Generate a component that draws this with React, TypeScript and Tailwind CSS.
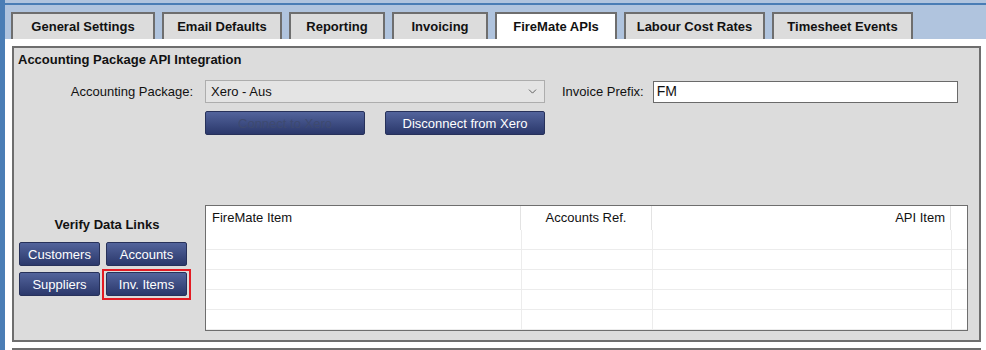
import { ChevronDown } from 'lucide-react';

const tabs = [
  { label: 'General Settings', w: 'w-[144px]' },
  { label: 'Email Defaults', w: 'w-[120px]' },
  { label: 'Reporting', w: 'w-[96px]' },
  { label: 'Invoicing', w: 'w-[96px]' },
  { label: 'FireMate APIs', w: 'w-[122px]', active: true },
  { label: 'Labour Cost Rates', w: 'w-[141px]' },
  { label: 'Timesheet Events', w: 'w-[141px]' },
];

const btn =
  'h-[24px] rounded-[2px] border border-[#27315a] bg-gradient-to-b from-[#53649c] to-[#2b386b] text-[13px] leading-none';

function NavyButton({ label, className = '', disabled = false }: { label: string; className?: string; disabled?: boolean }) {
  return (
    <button className={`${btn} ${disabled ? 'text-[#3e4a70]' : 'text-white'} ${className}`}>{label}</button>
  );
}

export default function App() {
  return (
    <div
      className="w-[986px] h-[350px] overflow-hidden bg-[#b0c4de] border-l-[5px] border-[#4a7db5] text-[#111]"
      style={{ fontFamily: '"Liberation Sans", Arial, sans-serif' }}
    >
      <div className="mt-[3px] h-[2px] bg-[#4a7db5]" />

      {/* tab strip */}
      <div className="flex gap-[7px] pl-[6px] pt-[7px]">
        {tabs.map((t) => (
          <div
            key={t.label}
            className={`${t.w} h-[27px] flex items-center justify-center border-2 border-b-0 border-[#6e6e6e] text-[13px] font-bold ${
              t.active ? 'bg-white' : 'bg-[#dcdcdc]'
            }`}
          >
            {t.label}
          </div>
        ))}
      </div>

      {/* content */}
      <div className="h-[311px] bg-white pl-[7px] pt-[7px]">
        <div className="w-[969px] h-[296px] border-2 border-[#6e6e6e] bg-[#dcdcdc] flex flex-col">
          <div className="pl-[4px] pt-[4px] text-[13px] font-bold leading-[16px]">
            Accounting Package API Integration
          </div>

          <div className="flex items-center mt-[12px] text-[13px]">
            <div className="w-[179px] text-right">Accounting Package:</div>
            <div className="ml-[12px] w-[340px] h-[23px] border border-[#adadad] bg-[#e4e4e4] flex items-center justify-between pl-[5px] pr-[5px]">
              <span>Xero - Aus</span>
              <ChevronDown size={13} strokeWidth={1.5} color="#444" />
            </div>
            <div className="ml-[17px]">Invoice Prefix:</div>
            <div className="ml-[9px] w-[305px] h-[22px] border border-[#6a6a6a] bg-white flex items-center pl-[3px] text-[14px]">
              FM
            </div>
          </div>

          <div className="flex mt-[8px] ml-[191px] gap-[20px]">
            <NavyButton label="Connect to Xero" className="w-[160px]" disabled />
            <NavyButton label="Disconnect from Xero" className="w-[160px]" />
          </div>

          <div className="flex mt-[70px]">
            <div className="w-[191px] pl-[5px] pt-[12px]">
              <div className="w-[168px] pl-[8px] text-center text-[13px] font-bold leading-[16px]">Verify Data Links</div>
              <div className="grid grid-cols-[81px_81px] gap-x-[6px] gap-y-[6px] mt-[9px]">
                <NavyButton label="Customers" />
                <NavyButton label="Accounts" />
                <NavyButton label="Suppliers" />
                {/* red highlight box around Inv. Items */}
                <div className="-mx-[4px] -mt-[3px] -mb-[4px] border-2 border-[#e31b23] px-[2px] pt-[1px] pb-[2px] flex">
                  <NavyButton label="Inv. Items" className="w-[81px]" />
                </div>
              </div>
            </div>

            <div className="w-[763px] h-[126px] border border-[#6e6e6e] bg-white text-[13px] flex flex-col">
              <div className="flex h-[24px] items-center">
                <div className="w-[315px] pl-[6px] border-r border-[#e3e3e3] h-full flex items-center">FireMate Item</div>
                <div className="w-[131px] text-center border-r border-[#e3e3e3] h-full flex items-center justify-center">
                  Accounts Ref.
                </div>
                <div className="w-[299px] pr-[5px] text-right border-r border-[#e3e3e3] h-full flex items-center justify-end">
                  API Item
                </div>
              </div>
              {[0, 1, 2, 3, 4].map((r) => (
                <div key={r} className="flex h-[20px] border-b border-[#ececec]">
                  <div className="w-[316px] border-r border-[#ececec]" />
                  <div className="w-[131px] border-r border-[#ececec]" />
                  <div className="w-[299px] border-r border-[#ececec]" />
                </div>
              ))}
            </div>
          </div>
        </div>
        <div className="mt-[6px] w-[969px] h-[20px] border-2 border-[#6e6e6e] bg-[#dcdcdc]" />
      </div>
    </div>
  );
}
